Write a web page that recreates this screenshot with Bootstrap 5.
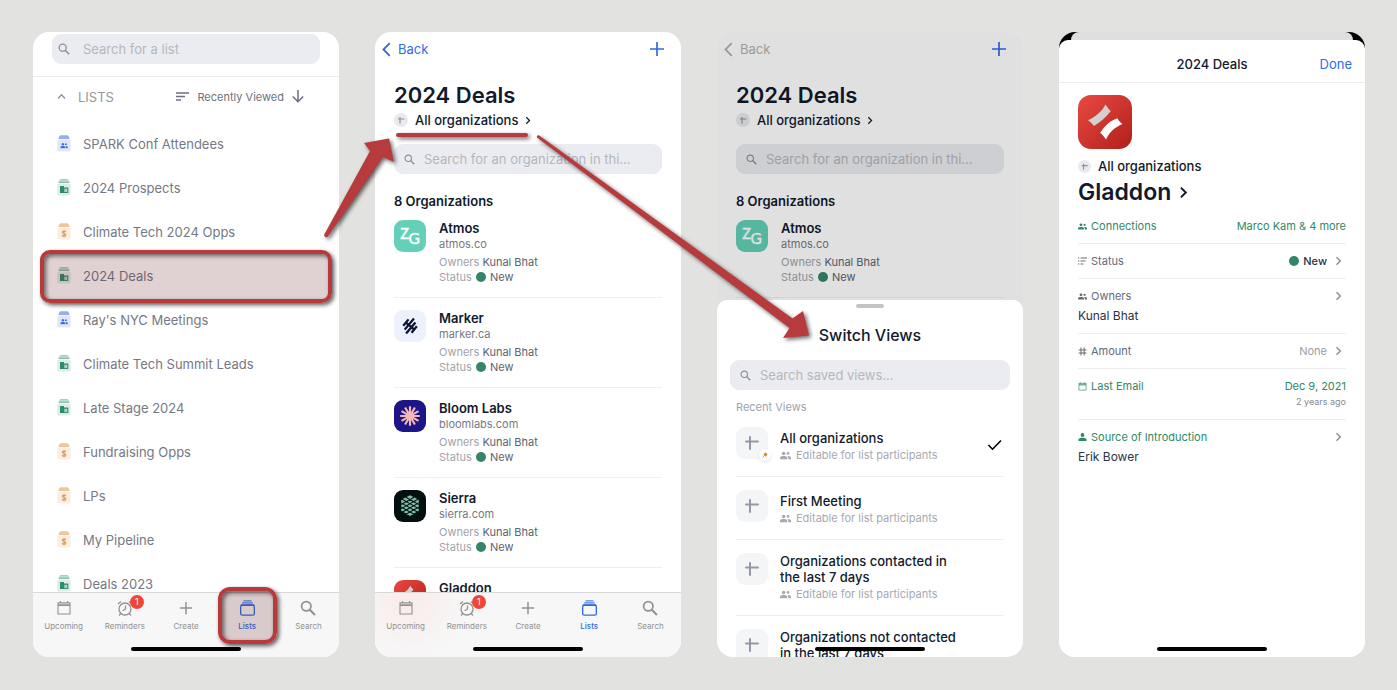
<!DOCTYPE html>
<html lang="en">
<head>
<meta charset="utf-8">
<meta name="viewport" content="width=device-width, initial-scale=1">
<title>Switch list views</title>
<link href="https://cdn.jsdelivr.net/npm/bootstrap@5.3.0/dist/css/bootstrap.min.css" rel="stylesheet">
<style>
  :root { --ink:#111a2c; --mid:#6b7180; --soft:#a0a3ab; --blue:#2f6be8; --green:#2f8a63; --red:#b73a3d; }
  body { background:#e2e2e0; font-family:Inter,"Liberation Sans",sans-serif; color:var(--ink); font-size:11px; line-height:16px; }
  svg { display:block; flex:none; }
  .stage { height:100vh; min-height:600px; padding:32px 32px 33px 33px; display:grid; grid-template-columns:repeat(4,minmax(0,1fr)); gap:36px; }
  .phone { background:#fff; border-radius:16px; overflow:hidden; }
  .gut { padding-left:19px; padding-right:19px; }
  .scroll-area { min-height:0; }
  .tap { background:none; border:0; padding:0; color:inherit; font-weight:inherit; text-align:left; text-decoration:none; }
  .home { position:absolute; bottom:6px; left:50%; width:110px; height:4px; margin-left:-55px; border-radius:2px; background:#000; z-index:3; }

  .find { height:30px; border-radius:9px; background:#ebecf1; padding-left:10px; color:#8e9098; gap:9px; }
  .find.wide { padding-left:6px; gap:13px; }
  .find.under { margin-top:14px; }
  .find.inset { margin:0 13px; }
  .find input { flex:1; min-width:0; border:0; padding:0; background:none; font-size:13px; line-height:20px; outline:0; text-overflow:ellipsis; }
  .find input::placeholder { color:#b5b7bd; opacity:1; }

  .lists-top { padding-top:2px; padding-bottom:12px; border-bottom:1px solid #ececee; }
  .lists-head { height:46px; padding:0 35px 5px 24px; color:var(--mid); }
  .lists-head h2 { font-size:13px; color:#9498a0; margin:0; font-weight:400; line-height:16px; }
  .list-row { height:44px; padding-left:24px; gap:12px; font-size:13px; line-height:20px; color:#757984; width:100%; }
  .picked::after, .picked-tab::after { content:""; position:absolute; border:4px solid var(--red); background:rgba(100,28,34,.2); border-radius:10px; box-shadow:2px 2px 4px rgba(0,0,0,.65), inset 2px 2px 4px rgba(0,0,0,.55); pointer-events:none; }
  .picked::after { inset:-4px 7px -5px 7px; }
  .picked-tab::after { inset:-6px 1px 13px 1px; border-radius:12px; }

  .tabs { height:65px; background:#f7f7f7; border-top:1px solid #d9d9da; z-index:2; }
  .tabs.tinted { background:radial-gradient(circle at 34px 4px,#f9ebea,#f7f7f7 60px); }
  .tabs a { flex:1 1 0; color:#929292; text-decoration:none; font-size:8px; line-height:12px; padding-top:7px; height:64px; }
  .tabs a.on { color:var(--blue); font-weight:500; }
  .tabs span.name { margin-top:4px; }
  .dot-badge { position:absolute; top:-5px; right:-11px; width:14px; height:14px; border-radius:50%; background:#f04637; color:#fff; font-size:9px; line-height:14px; text-align:center; }

  .topnav { height:34px; padding:0 16px 0 7px; color:var(--blue); font-size:13px; }
  .topnav .tap { gap:7px; }
  .topnav .faded { color:#b0b0b0; }
  .page-title { font-size:22px; line-height:30px; font-weight:600; margin:14px 0 0; }
  .view-row { height:20px; font-size:13px; font-weight:500; line-height:20px; gap:7px; }
  .view-row.below { margin-top:7px; }
  .count { font-size:13px; line-height:14px; font-weight:600; margin:20px 0 0; }
  .org { padding:12px 0; border-bottom:1px solid #efeff1; gap:13px; }
  .org h3, .view h3 { font-size:13px; line-height:16px; font-weight:500; margin:0; }
  .org h3 { font-weight:600; }
  .org p { margin:0; line-height:15px; color:#5d6370; }
  .org p.site { line-height:16px; margin-bottom:3px; color:#757984; }
  .org .key { color:var(--soft); }
  .bead { display:inline-block; width:10px; height:10px; border-radius:50%; background:#33866a; vertical-align:-1px; margin:0 1px; }
  .tile { width:32px; height:32px; border-radius:9px; flex:none; overflow:hidden; }

  .shade { position:absolute; inset:0; background:rgba(0,0,0,.12); pointer-events:none; }
  .sheet { position:absolute; left:0; right:0; top:268px; bottom:0; background:#fff; border-radius:10px 10px 0 0; overflow:hidden; }
  .grip { width:28px; height:4px; border-radius:2px; background:#c4c4c6; margin:4px auto 0; }
  .sheet h2 { font-size:16px; line-height:20px; font-weight:500; margin:17px 0 15px; text-align:center; }
  .recent { font-size:11px; line-height:16px; color:var(--soft); margin:9px 0 6px; font-weight:400; }
  .view { padding:6px 0 13px; gap:12px; border-bottom:1px solid #efeff1; }
  .view + .view { padding-top:13px; }
  .view .tile { background:#f4f5f7; color:#9399a6; }
  .view .solo { padding-top:3px; }
  .view .who { color:#a6a9b2; font-size:11px; line-height:16px; margin-top:1px; gap:5px; }
  .pin { position:absolute; left:23px; top:22px; width:12px; height:12px; border-radius:50%; background:#fff; box-shadow:0 1px 3px rgba(0,0,0,.12); }

  .behind { background:linear-gradient(#000 30px,#fff 30px); }
  .peek { height:8px; margin:0 12px; background:#dedede; border-radius:8px 8px 0 0; }
  .card-sheet { background:#fff; border-radius:9px 9px 0 0; }
  .sheet-nav { height:43px; padding:5px 13px 0; border-bottom:1px solid #ececee; display:grid; grid-template-columns:1fr auto 1fr; font-size:13px; font-weight:500; }
  .sheet-nav .done { color:var(--blue); font-weight:400; }
  .profile { padding-top:12px; }
  .firm { font-size:23px; line-height:28px; font-weight:600; margin:2px 0 4px; }
  .field { padding:9px 0; border-bottom:1px solid #eeeef0; color:#646a78; }
  .field.tall { padding-bottom:7px; }
  .field:last-child { border-bottom:0; }
  .field .label { gap:4px; }
  .field.green, .green { color:var(--green); }
  .field .val { font-size:12px; line-height:20px; margin-top:2px; color:#2b3344; }
  .field .tiny { font-size:9px; color:#868a94; }
  .field .set { color:#2b3344; font-weight:500; }
  .field .unset { color:#9a9da6; }
  .arrows { position:absolute; inset:0; width:100%; height:100%; pointer-events:none; z-index:5; filter:drop-shadow(2px 2px 2px rgba(0,0,0,.6)); }
</style>
</head>
<body>
<svg width="0" height="0" class="position-absolute" aria-hidden="true">
  <defs>
    <symbol id="mag" viewBox="0 0 12 12"><circle cx="4.700" cy="4.700" r="3.500" fill="none" stroke="currentColor" stroke-width="1.300"/><path d="M7.200 7.200 11.200 11.200" stroke="currentColor" stroke-width="1.600"/></symbol>
    <symbol id="people" viewBox="0 0 12 9"><circle cx="4" cy="2.300" r="1.900" fill="currentColor"/><circle cx="8.800" cy="2.300" r="1.500" fill="currentColor"/><path d="M0 8.500V7C0 5.500 2.200 5 4 5s4 .5 4 2v1.500zM9 8.500V7c0-.9-.4-1.500-1-1.900 1.800-.1 4 .4 4 1.900v1.500z" fill="currentColor"/></symbol>
    <symbol id="jar-top" viewBox="0 0 14 17"><path d="M3.800.3h6.400c1.200 0 1.900 1.200 2.300 3.700h-11C1.900 1.500 2.600.3 3.800.3z" fill="currentColor" opacity=".55"/><rect x=".2" y="4.600" width="13.600" height="12" rx="2" fill="currentColor" opacity=".16"/></symbol>
    <symbol id="jar-people" viewBox="0 0 14 17"><use href="#jar-top" width="14" height="17"/><use href="#people" x="3.300" y="7.700" width="7.600" height="6"/></symbol>
    <symbol id="jar-org" viewBox="0 0 14 17"><use href="#jar-top" width="14" height="17"/><path d="M1.500 1.900h11" stroke="#fff" stroke-width=".7"/><path d="M3 7h4v1.500h4.300v5.500H3z" fill="currentColor"/><path d="M7.400 9.800h2.800v3.300H7.400z" fill="#cfe6dc"/><path d="M8.300 10.800h1M8.300 12.200h1" stroke="currentColor" stroke-width=".6"/></symbol>
    <symbol id="jar-money" viewBox="0 0 14 17"><use href="#jar-top" width="14" height="17"/><path d="M8.800 8.900C8.500 8.200 7.800 8 7 8c-1 0-1.700.5-1.700 1.200C5.300 11 8.800 10 8.800 12c0 .8-.8 1.300-1.800 1.300s-1.700-.4-1.900-1.100M7 7v7.300" fill="none" stroke="currentColor" stroke-width="1.100"/></symbol>
    <symbol id="cal" viewBox="0 0 14 15"><path d="M1 3.800h12v9.700H1zM1 3.800V2.300h12v1.500M1.200 5h11.600M3.500.6v2M10.500.6v2" fill="none" stroke="currentColor" stroke-width="1.100"/></symbol>
    <symbol id="alarm" viewBox="0 0 16 16"><circle cx="8" cy="9" r="6" fill="none" stroke="currentColor" stroke-width="1.300"/><path d="M8.500 5.500V9L5.600 10.800M1 4 4 1.400M15 4l-3-2.600M3.800 13.500 2 15.500M12.200 13.500l1.800 2" fill="none" stroke="currentColor" stroke-width="1.300"/></symbol>
    <symbol id="plus" viewBox="0 0 16 16"><path d="M8 1v14M1 8h14" stroke="currentColor" stroke-width="1.700"/></symbol>
    <symbol id="stack" viewBox="0 0 18 18"><path d="M4.500 1h9M3 3.200h12" stroke="currentColor" stroke-width="1.300" opacity=".8"/><rect x="1.300" y="6" width="15.400" height="11" rx="1.800" fill="none" stroke="currentColor" stroke-width="1.500"/><path d="M1.300 6.500c0-1 .5-1.500 1.500-1.500h12.400c1 0 1.500.5 1.500 1.500" fill="none" stroke="currentColor"/></symbol>
    <symbol id="next" viewBox="0 0 7 10"><path d="M1.500 1.200 5.300 5 1.500 8.800" fill="none" stroke="currentColor" stroke-width="1.500"/></symbol>
    <symbol id="prev" viewBox="0 0 10 16"><path d="M8.600 1 1.600 8l7 7" fill="none" stroke="currentColor" stroke-width="2"/></symbol>
    <symbol id="grid-t" viewBox="0 0 14 14"><path d="M5 1v12M1 5.500h12" stroke="currentColor" stroke-width="2" stroke-linecap="round"/></symbol>
    <symbol id="grid-dot" viewBox="0 0 14 14"><circle cx="7" cy="7" r="7" fill="#e9eaee"/><path d="M6 4v6.400M4 6h6.500" stroke="#8d929e" stroke-width="1.200"/></symbol>
    <symbol id="bars" viewBox="0 0 9 8"><path d="M2.500 1H9M2.500 4h5M2.500 7h3M0 1h1.300M0 4h1.300M0 7h1.300" stroke="currentColor"/></symbol>
    <linearGradient id="redfade" x1="0" y1="0" x2="1" y2="1"><stop offset="0" stop-color="#ea4a42"/><stop offset="1" stop-color="#b01f1a"/></linearGradient>
    <symbol id="gladdon" viewBox="0 0 54 54"><rect width="54" height="54" rx="13" fill="url(#redfade)"/><path d="M27.500 9.500c1.500 2.500 3.500 5 5.300 6.600C27.500 23 22 27.500 16 31c-2-2.500-4-4.500-6-5.800C17 22 24 16.500 27.500 9.500z" fill="#d2d0d0"/><path d="M28 44.500c-1.500-2.500-3.500-5-5.800-6.600C27 30 32.500 25.500 39.500 23.200c1 2.300 3 4.500 5 5.800C37 32 31.500 37 28 44.500z" fill="#fff"/></symbol>
    <symbol id="atmos" viewBox="0 0 31 31"><rect width="31" height="31" fill="#63d0b7"/><text x="6" y="18" font-family="Lato,sans-serif" font-size="14" fill="#fff" stroke="#fff" stroke-width=".4">Z</text><text x="14" y="23" font-family="Lato,sans-serif" font-size="15" fill="#fff" stroke="#fff" stroke-width=".4">G</text></symbol>
  </defs>
</svg>

<main class="stage position-relative">

  <!-- All lists -->
  <section class="phone position-relative d-flex flex-column" aria-label="Lists">
    <div class="lists-top gut">
      <div class="find wide d-flex align-items-center"><svg width="12" height="12"><use href="#mag"/></svg><input aria-label="Search lists" type="search" placeholder="Search for a list"></div>
    </div>
    <div class="lists-head d-flex align-items-center">
      <svg width="9" height="7" viewBox="0 0 9 7"><path d="M1 5.500 4.500 1.800 8 5.500" fill="none" stroke="#8d919b" stroke-width="1.300"/></svg>
      <h2 class="ms-2 ps-1">LISTS</h2>
      <button class="tap d-flex align-items-center ms-auto gap-2"><svg width="13" height="9" viewBox="0 0 13 9"><path d="M0 1h13M0 4.500h9M0 8h5" stroke="currentColor" stroke-width="1.300"/></svg>Recently Viewed<svg width="12" height="13" viewBox="0 0 12 13"><path d="M6 0v11.500M.8 6.500 6 11.700l5.200-5.200" fill="none" stroke="currentColor" stroke-width="1.500"/></svg></button>
    </div>
    <div class="scroll-area flex-fill overflow-hidden">
      <a href="#" class="tap list-row d-flex align-items-center"><svg width="14" height="17" color="#3a6ee0"><use href="#jar-people"/></svg>SPARK Conf Attendees</a>
      <a href="#" class="tap list-row d-flex align-items-center"><svg width="14" height="17" color="#2f8a68"><use href="#jar-org"/></svg>2024 Prospects</a>
      <a href="#" class="tap list-row d-flex align-items-center"><svg width="14" height="17" color="#e2964a"><use href="#jar-money"/></svg>Climate Tech 2024 Opps</a>
      <a href="#" class="tap list-row d-flex align-items-center position-relative picked"><svg width="14" height="17" color="#2f8a68"><use href="#jar-org"/></svg>2024 Deals</a>
      <a href="#" class="tap list-row d-flex align-items-center"><svg width="14" height="17" color="#3a6ee0"><use href="#jar-people"/></svg>Ray's NYC Meetings</a>
      <a href="#" class="tap list-row d-flex align-items-center"><svg width="14" height="17" color="#2f8a68"><use href="#jar-org"/></svg>Climate Tech Summit Leads</a>
      <a href="#" class="tap list-row d-flex align-items-center"><svg width="14" height="17" color="#2f8a68"><use href="#jar-org"/></svg>Late Stage 2024</a>
      <a href="#" class="tap list-row d-flex align-items-center"><svg width="14" height="17" color="#e2964a"><use href="#jar-money"/></svg>Fundraising Opps</a>
      <a href="#" class="tap list-row d-flex align-items-center"><svg width="14" height="17" color="#e2964a"><use href="#jar-money"/></svg>LPs</a>
      <a href="#" class="tap list-row d-flex align-items-center"><svg width="14" height="17" color="#e2964a"><use href="#jar-money"/></svg>My Pipeline</a>
      <a href="#" class="tap list-row d-flex align-items-center"><svg width="14" height="17" color="#2f8a68"><use href="#jar-org"/></svg>Deals 2023</a>
    </div>
    <nav class="tabs d-flex">
      <a href="#" class="d-flex flex-column align-items-center"><svg width="14" height="16"><use href="#cal"/></svg><span class="name">Upcoming</span></a>
      <a href="#" class="d-flex flex-column align-items-center"><span class="position-relative"><svg width="16" height="16"><use href="#alarm"/></svg><span class="dot-badge">1</span></span><span class="name">Reminders</span></a>
      <a href="#" class="d-flex flex-column align-items-center"><svg width="14" height="16"><use href="#plus"/></svg><span class="name">Create</span></a>
      <a href="#" class="on d-flex flex-column align-items-center position-relative picked-tab"><svg width="17" height="16"><use href="#stack"/></svg><span class="name">Lists</span></a>
      <a href="#" class="d-flex flex-column align-items-center"><svg width="16" height="16"><use href="#mag"/></svg><span class="name">Search</span></a>
    </nav>
    <div class="home"></div>
  </section>

  <!-- One list -->
  <section class="phone position-relative d-flex flex-column" aria-label="2024 Deals">
    <div class="topnav d-flex align-items-center flex-shrink-0"><button class="tap d-flex align-items-center"><svg width="9" height="15"><use href="#prev"/></svg>Back</button><button class="tap ms-auto" aria-label="Add"><svg width="16" height="16"><use href="#plus"/></svg></button></div>
    <div class="gut scroll-area flex-fill overflow-hidden">
      <h1 class="page-title">2024 Deals</h1>
      <button class="tap view-row d-flex align-items-center"><svg width="14" height="14"><use href="#grid-dot"/></svg>All organizations<svg width="6" height="9"><use href="#next"/></svg></button>
      <div class="find under d-flex align-items-center"><svg width="11" height="11"><use href="#mag"/></svg><input aria-label="Search organizations" type="search" placeholder="Search for an organization in thi..."></div>
      <h2 class="count">8 Organizations</h2>
      <article class="org d-flex"><svg class="tile"><use href="#atmos"/></svg><div><h3>Atmos</h3><p class="site">atmos.co</p><p><span class="key">Owners</span> Kunal Bhat</p><p><span class="key">Status</span> <i class="bead"></i> New</p></div></article>
      <article class="org d-flex"><svg class="tile" viewBox="0 0 31 31"><rect width="31" height="31" fill="#edf1fc"/><g transform="rotate(40 15.500 15.500)" stroke="#0d1430" stroke-width="2.200"><path d="M10.300 11.500v8M13.800 7.500v14M17.300 9.500v14M20.800 11.500v8M10.300 15.500h3.500M13.800 15.500h3.500M17.300 15.500h3.500"/></g></svg><div><h3>Marker</h3><p class="site">marker.ca</p><p><span class="key">Owners</span> Kunal Bhat</p><p><span class="key">Status</span> <i class="bead"></i> New</p></div></article>
      <article class="org d-flex"><svg class="tile" viewBox="0 0 31 31"><rect width="31" height="31" fill="#1c1487"/><g stroke="#f4b9b4" stroke-width="2.100"><path d="M15.500 6v19M6 15.500h19M10.750 7.270l9.500 16.460M20.250 7.270l-9.500 16.460M7.270 10.750l16.460 9.500M7.270 20.250l16.460-9.500"/></g></svg><div><h3>Bloom Labs</h3><p class="site">bloomlabs.com</p><p><span class="key">Owners</span> Kunal Bhat</p><p><span class="key">Status</span> <i class="bead"></i> New</p></div></article>
      <article class="org d-flex"><svg class="tile" viewBox="0 0 31 31"><rect width="31" height="31" fill="#04100f"/><path d="M15.500 5 24 9.500v11L15.500 25.500 7 20.500v-11z" fill="#7cc0a7"/><path d="M7 8.500 24 18M7 12.500l17 9.500M7 16.500 22 25M7 20.500l8 5M11.500 7 24 14M24 8.500 7 18M24 12.500 7 22M24 16.500 9 25M24 20.500l-8 5M19.500 7 7 14" stroke="#04100f" stroke-width="1"/></svg><div><h3>Sierra</h3><p class="site">sierra.com</p><p><span class="key">Owners</span> Kunal Bhat</p><p><span class="key">Status</span> <i class="bead"></i> New</p></div></article>
      <article class="org d-flex"><svg class="tile"><use href="#gladdon"/></svg><div><h3>Gladdon</h3></div></article>
    </div>
    <nav class="tabs tinted d-flex">
      <a href="#" class="d-flex flex-column align-items-center"><svg width="14" height="16"><use href="#cal"/></svg><span class="name">Upcoming</span></a>
      <a href="#" class="d-flex flex-column align-items-center"><span class="position-relative"><svg width="16" height="16"><use href="#alarm"/></svg><span class="dot-badge">1</span></span><span class="name">Reminders</span></a>
      <a href="#" class="d-flex flex-column align-items-center"><svg width="14" height="16"><use href="#plus"/></svg><span class="name">Create</span></a>
      <a href="#" class="on d-flex flex-column align-items-center"><svg width="17" height="16"><use href="#stack"/></svg><span class="name">Lists</span></a>
      <a href="#" class="d-flex flex-column align-items-center"><svg width="16" height="16"><use href="#mag"/></svg><span class="name">Search</span></a>
    </nav>
    <div class="home"></div>
  </section>

  <!-- View switcher over the list -->
  <section class="phone position-relative" aria-label="Switch Views">
    <div class="topnav d-flex align-items-center"><button class="tap faded d-flex align-items-center"><svg width="9" height="15"><use href="#prev"/></svg>Back</button><button class="tap ms-auto" aria-label="Add"><svg width="16" height="16"><use href="#plus"/></svg></button></div>
    <div class="gut">
      <h1 class="page-title">2024 Deals</h1>
      <button class="tap view-row d-flex align-items-center"><svg width="14" height="14"><use href="#grid-dot"/></svg>All organizations<svg width="6" height="9"><use href="#next"/></svg></button>
      <div class="find under d-flex align-items-center"><svg width="11" height="11"><use href="#mag"/></svg><input aria-label="Search organizations" type="search" placeholder="Search for an organization in thi..."></div>
      <h2 class="count">8 Organizations</h2>
      <article class="org d-flex"><svg class="tile"><use href="#atmos"/></svg><div><h3>Atmos</h3><p class="site">atmos.co</p><p><span class="key">Owners</span> Kunal Bhat</p><p><span class="key">Status</span> <i class="bead"></i> New</p></div></article>
    </div>
    <div class="shade"></div>
    <div class="sheet">
      <div class="grip"></div>
      <h2>Switch Views</h2>
      <div class="find inset d-flex align-items-center"><svg width="11" height="11"><use href="#mag"/></svg><input aria-label="Search saved views" type="search" placeholder="Search saved views..."></div>
      <div class="gut">
        <h3 class="recent">Recent Views</h3>
        <article class="view d-flex">
          <div class="position-relative"><div class="tile d-flex align-items-center justify-content-center"><svg width="14" height="14"><use href="#grid-t"/></svg></div><span class="pin d-flex align-items-center justify-content-center"><svg width="6" height="6" viewBox="0 0 6 6"><path d="M.5 5.500 3 3" stroke="#e68a2e" stroke-width=".8"/><path d="M1.300 2.200 3.700.5 5.500 2.200 3.800 4.700z" fill="#e67e1c"/></svg></span></div>
          <div class="flex-fill solo"><h3>All organizations</h3><div class="who d-flex align-items-center"><svg width="11" height="9"><use href="#people"/></svg>Editable for list participants</div></div>
          <svg class="align-self-center" width="18" height="12" viewBox="0 0 18 12"><path d="M2.500 6 6.500 10.200 15 1.500" fill="none" stroke="#000" stroke-width="1.600"/></svg>
        </article>
        <article class="view d-flex">
          <div class="tile d-flex align-items-center justify-content-center"><svg width="14" height="14"><use href="#grid-t"/></svg></div>
          <div class="solo"><h3>First Meeting</h3><div class="who d-flex align-items-center"><svg width="11" height="9"><use href="#people"/></svg>Editable for list participants</div></div>
        </article>
        <article class="view d-flex">
          <div class="tile d-flex align-items-center justify-content-center"><svg width="14" height="14"><use href="#grid-t"/></svg></div>
          <div><h3>Organizations contacted in<br>the last 7 days</h3><div class="who d-flex align-items-center"><svg width="11" height="9"><use href="#people"/></svg>Editable for list participants</div></div>
        </article>
        <article class="view d-flex">
          <div class="tile d-flex align-items-center justify-content-center"><svg width="14" height="14"><use href="#grid-t"/></svg></div>
          <div><h3>Organizations not contacted<br>in the last 7 days</h3></div>
        </article>
      </div>
    </div>
    <div class="home"></div>
  </section>

  <!-- Organization profile -->
  <section class="phone behind position-relative d-flex flex-column" aria-label="Gladdon">
    <div class="peek flex-shrink-0"></div>
    <div class="card-sheet flex-fill">
      <div class="sheet-nav align-items-center"><span></span><span>2024 Deals</span><button class="tap done text-end">Done</button></div>
      <div class="gut profile">
        <svg width="54" height="54"><use href="#gladdon"/></svg>
        <div class="view-row below d-flex align-items-center"><svg width="13" height="13"><use href="#grid-dot"/></svg>All organizations</div>
        <h1 class="firm d-flex align-items-center gap-2">Gladdon<svg width="9" height="13"><use href="#next"/></svg></h1>
        <div>
          <div class="field green d-flex justify-content-between pt-2"><span class="label d-flex align-items-center"><svg width="9" height="7"><use href="#people"/></svg>Connections</span><a href="#" class="tap">Marco Kam &amp; 4 more</a></div>
          <div class="field d-flex justify-content-between"><span class="label d-flex align-items-center"><svg width="9" height="8"><use href="#bars"/></svg>Status</span><button class="tap set d-flex align-items-center pe-1"><i class="bead me-1"></i>New<svg class="ms-2" width="7" height="10" color="#8d919b"><use href="#next"/></svg></button></div>
          <div class="field tall"><div class="d-flex justify-content-between align-items-center"><span class="label d-flex align-items-center"><svg width="9" height="7"><use href="#people"/></svg>Owners</span><svg class="me-1" width="7" height="10" color="#8d919b"><use href="#next"/></svg></div><div class="val">Kunal Bhat</div></div>
          <div class="field d-flex justify-content-between"><span class="label d-flex align-items-center"><svg width="9" height="9" viewBox="0 0 9 9"><path d="M3 .5v8M6.200.5v8M.7 3h7.800M.7 6h7.800" stroke="currentColor"/></svg>Amount</span><button class="tap unset d-flex align-items-center pe-1">None<svg class="ms-2" width="7" height="10" color="#8d919b"><use href="#next"/></svg></button></div>
          <div class="field green d-flex justify-content-between align-items-start"><span class="label d-flex align-items-center"><svg width="9" height="9"><use href="#cal"/></svg>Last Email</span><div class="text-end">Dec 9, 2021<div class="tiny">2 years ago</div></div></div>
          <div class="field"><div class="d-flex justify-content-between align-items-center"><span class="label green d-flex align-items-center"><svg width="9" height="8" viewBox="0 0 9 8"><circle cx="4.500" cy="2" r="1.900" fill="currentColor"/><path d="M.5 8V6.500C.5 5.200 2.700 4.700 4.500 4.700s4 .5 4 1.800V8z" fill="currentColor"/></svg>Source of Introduction</span><svg class="me-1" width="7" height="10" color="#8d919b"><use href="#next"/></svg></div><div class="val">Erik Bower</div></div>
        </div>
      </div>
    </div>
    <div class="home"></div>
  </section>

  <svg class="arrows" viewBox="0 0 1397 690" preserveAspectRatio="none" fill="#b73a3d" aria-hidden="true">
    <rect x="396" y="133" width="132" height="4" rx="2"/>
    <path d="M324 235 370 151 364 143 389 138.500 394 162 383 157 327.500 237q-2.500 1-3.500-2z"/>
    <path d="M538.500 135 792.500 318.500 803 311 809 335.500 783 338 789.500 328 537 137.500q-.5-2 1.500-2.500z"/>
  </svg>
</main>
<script src="https://cdn.jsdelivr.net/npm/bootstrap@5.3.0/dist/js/bootstrap.bundle.min.js"></script>
</body>
</html>
